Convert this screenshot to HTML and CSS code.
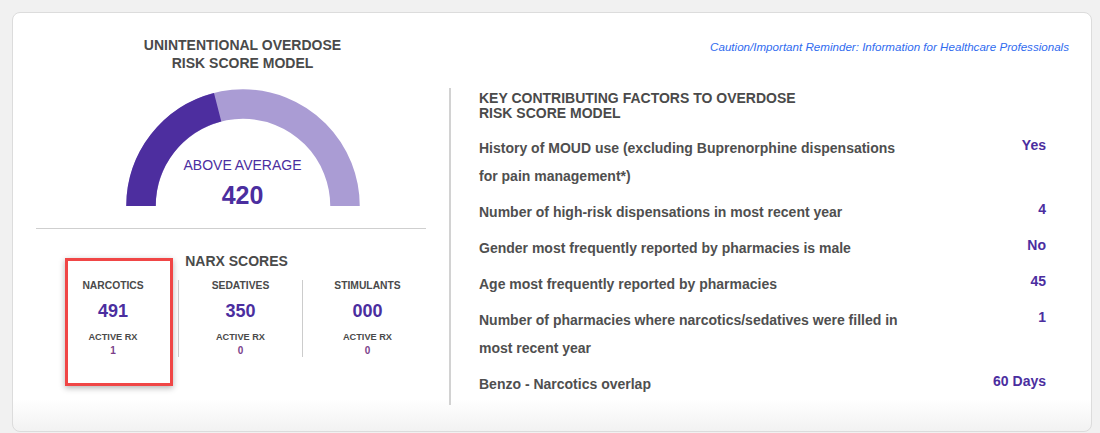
FILE: index.html
```html
<!DOCTYPE html>
<html lang="en">
<head>
<meta charset="utf-8">
<title>Overdose Risk Score</title>
<link rel="stylesheet" href="styles.css">
</head>
<body>
<div class="card">
  <section class="risk">
    <h2 class="risk-title">UNINTENTIONAL OVERDOSE<br>RISK SCORE MODEL</h2>
    <div class="gauge">
      <svg width="240" height="118" viewBox="0 0 240 118">
        <path d="M 18 117 A 102 102 0 0 1 222 117" fill="none" stroke="#aa9cd4" stroke-width="29.5"/>
        <path d="M 18 117 A 102 102 0 0 1 94.63 18.2" fill="none" stroke="#4d2e9f" stroke-width="29.5"/>
      </svg>
      <div class="gauge-label">ABOVE AVERAGE</div>
      <div class="gauge-score">420</div>
    </div>
    <hr class="divider">
    <div class="narx">
      <h3 class="narx-title">NARX SCORES</h3>
      <div class="narx-cols">
        <div class="narx-col">
          <div class="narx-label">NARCOTICS</div>
          <div class="narx-score">491</div>
          <div class="narx-sub">ACTIVE RX</div>
          <div class="narx-rx">1</div>
        </div>
        <div class="narx-col">
          <div class="narx-label">SEDATIVES</div>
          <div class="narx-score">350</div>
          <div class="narx-sub">ACTIVE RX</div>
          <div class="narx-rx">0</div>
        </div>
        <div class="narx-col">
          <div class="narx-label">STIMULANTS</div>
          <div class="narx-score">000</div>
          <div class="narx-sub">ACTIVE RX</div>
          <div class="narx-rx">0</div>
        </div>
        <div class="highlight"></div>
      </div>
    </div>
  </section>
  <section class="factors-wrap">
    <p class="caution">Caution/Important Reminder: Information for Healthcare Professionals</p>
    <div class="factors">
      <h3 class="factors-title">KEY CONTRIBUTING FACTORS TO OVERDOSE<br>RISK SCORE MODEL</h3>
      <ul class="factor-list">
        <li class="factor"><span class="factor-label">History of MOUD use (excluding Buprenorphine dispensations for pain management*)</span><span class="factor-value">Yes</span></li>
        <li class="factor"><span class="factor-label">Number of high-risk dispensations in most recent year</span><span class="factor-value">4</span></li>
        <li class="factor"><span class="factor-label">Gender most frequently reported by pharmacies is male</span><span class="factor-value">No</span></li>
        <li class="factor"><span class="factor-label">Age most frequently reported by pharmacies</span><span class="factor-value">45</span></li>
        <li class="factor"><span class="factor-label">Number of pharmacies where narcotics/sedatives were filled in most recent year</span><span class="factor-value">1</span></li>
        <li class="factor"><span class="factor-label">Benzo - Narcotics overlap</span><span class="factor-value">60 Days</span></li>
      </ul>
    </div>
  </section>
</div>
</body>
</html>
```

FILE: styles.css
```css
* { box-sizing: border-box; }

html, body {
  margin: 0;
  padding: 0;
  background: #f1f1f1;
  font-family: "Liberation Sans", Arial, sans-serif;
}

.card {
  margin: 12px 0 0 12px;
  width: 1080px;
  height: 420px;
  border: 1px solid #dcdcdc;
  border-radius: 8px;
  background: linear-gradient(to bottom, #ffffff 0, #ffffff calc(100% - 32px), #f2f2f2 100%);
  padding: 23px 22px 0 23px;
  display: flex;
  align-items: flex-start;
}

/* Left column */
.risk {
  width: 413px;
  flex: none;
  display: flex;
  flex-direction: column;
  align-items: center;
}

.risk-title {
  margin: 1px 0 0 0;
  font-size: 14px;
  line-height: 17.5px;
  font-weight: bold;
  color: #4a4a4a;
  text-align: center;
}

.gauge {
  position: relative;
  width: 240px;
  height: 118px;
  margin-top: 17px;
}

.gauge svg { display: block; }

.gauge-label {
  position: absolute;
  left: 0;
  right: 0;
  top: 68px;
  text-align: center;
  font-size: 14px;
  line-height: 16px;
  color: #4b2e9f;
}

.gauge-score {
  position: absolute;
  left: 0;
  right: 0;
  top: 92px;
  text-align: center;
  font-size: 25px;
  line-height: 28px;
  font-weight: bold;
  color: #4b2e9f;
}

.divider {
  align-self: stretch;
  margin: 21px 23px 0 0;
  border: 0;
  border-top: 1.5px solid #cfcfcf;
  height: 0;
}

.narx {
  align-self: stretch;
}

.narx-title {
  margin: 23.5px 12px 0 0;
  font-size: 14px;
  line-height: 17px;
  font-weight: bold;
  color: #4a4a4a;
  text-align: center;
}

.narx-cols {
  position: relative;
  margin: 10.5px 0 0 12px;
  display: grid;
  grid-template-columns: 130px 124px 130px;
}

.narx-col {
  text-align: center;
  height: 77px;
}

.narx-col + .narx-col {
  border-left: 1.5px solid #cccccc;
}

.narx-label {
  font-size: 10.3px;
  line-height: 12px;
  font-weight: bold;
  color: #4a4a4a;
}

.narx-score {
  margin-top: 8px;
  font-size: 18px;
  line-height: 22px;
  font-weight: bold;
  color: #4b2e9f;
}

.narx-sub {
  margin-top: 9.5px;
  font-size: 9.2px;
  line-height: 11px;
  font-weight: bold;
  color: #4a4a4a;
}

.narx-rx {
  margin-top: 2.5px;
  font-size: 10px;
  line-height: 12px;
  font-weight: bold;
  color: #7b3f8a;
}

.highlight {
  position: absolute;
  left: 17px;
  top: -22px;
  width: 108px;
  height: 128px;
  border: 3px solid #f04646;
  box-shadow: 0 2px 6px rgba(0, 0, 0, 0.3);
  pointer-events: none;
}

/* Right column */
.factors-wrap {
  width: 620px;
  flex: none;
}

.caution {
  margin: 4px 0 0 0;
  text-align: right;
  font-size: 11.6px;
  line-height: 13.5px;
  font-style: italic;
  color: #2f6bef;
}

.factors {
  margin-top: 34.5px;
  border-left: 2px solid #d2d2d2;
  padding: 2.5px 23px 7px 28px;
}

.factors-title {
  margin: 0;
  font-size: 14px;
  line-height: 15px;
  font-weight: bold;
  color: #4a4a4a;
}

.factor-list {
  list-style: none;
  margin: 13.5px 0 0 0;
  padding: 0;
}

.factor {
  display: flex;
  align-items: flex-start;
  margin-bottom: 8px;
}

.factor:last-child { margin-bottom: 0; }

.factor-label {
  width: 428px;
  flex: none;
  font-size: 14px;
  line-height: 28px;
  font-weight: bold;
  color: #4f4f4f;
}

.factor-value {
  flex: 1;
  text-align: right;
  font-size: 14px;
  line-height: 23px;
  font-weight: bold;
  color: #4b2e9f;
}
```
